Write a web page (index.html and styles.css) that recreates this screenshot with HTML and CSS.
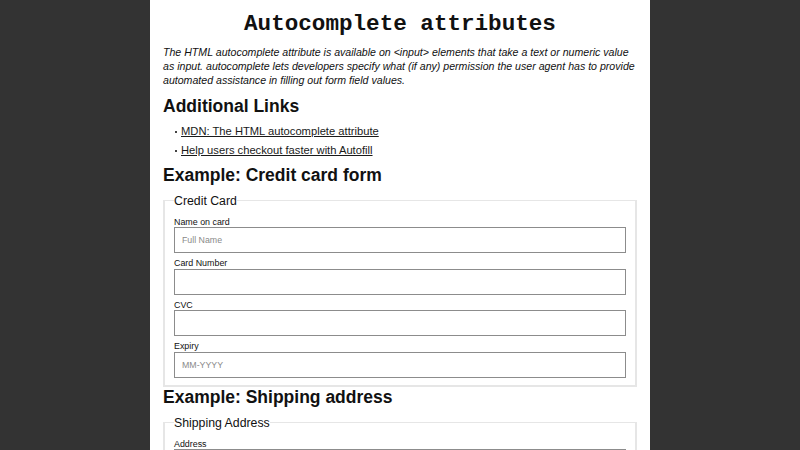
FILE: index.html
```html
<!DOCTYPE html>
<html lang="en">
<head>
  <meta charset="UTF-8" />
  <title>Autocomplete attributes</title>
  <meta name="viewport" content="width=device-width, initial-scale=1" />
  <link rel="stylesheet" href="styles.css">
</head>
<body>
  <main class="page">
    <h1>Autocomplete attributes</h1>
    <p class="intro">The HTML autocomplete attribute is available on &lt;input&gt; elements that take a text or numeric value as input. autocomplete lets developers specify what (if any) permission the user agent has to provide automated assistance in filling out form field values.</p>

    <h2>Additional Links</h2>
    <ul class="links">
      <li><a href="#">MDN: The HTML autocomplete attribute</a></li>
      <li><a href="#">Help users checkout faster with Autofill</a></li>
    </ul>

    <h2>Example: Credit card form</h2>
    <form>
      <fieldset>
        <legend>Credit Card</legend>
        <label for="cc-name">Name on card</label>
        <input id="cc-name" name="cc-name" autocomplete="cc-name" placeholder="Full Name" />
        <label for="cc-number">Card Number</label>
        <input id="cc-number" name="cc-number" autocomplete="cc-number" />
        <label for="cc-csc">CVC</label>
        <input id="cc-csc" name="cc-csc" autocomplete="cc-csc" />
        <label for="cc-exp">Expiry</label>
        <input id="cc-exp" name="cc-exp" autocomplete="cc-exp" placeholder="MM-YYYY" />
      </fieldset>
    </form>

    <h2>Example: Shipping address</h2>
    <form>
      <fieldset>
        <legend>Shipping Address</legend>
        <label for="address">Address</label>
        <input id="address" name="address" autocomplete="street-address" />
        <label for="city">City</label>
        <input id="city" name="city" autocomplete="address-level2" />
        <label for="postal">Postal Code</label>
        <input id="postal" name="postal" autocomplete="postal-code" />
      </fieldset>
    </form>
  </main>
</body>
</html>
```

FILE: styles.css
```css
body {
  margin: 0;
  background: #333;
  font-family: "Liberation Sans", Arial, sans-serif;
  color: #111;
}
.page {
  width: 474px;
  margin: 0 auto;
  padding: 10px 13px 20px 13px;
  background: #fff;
  min-height: 100vh;
}
h1 {
  font-family: "Liberation Mono", "Courier New", monospace;
  font-size: 22.6px;
  line-height: 28px;
  text-align: center;
  margin: 0;
}
.intro {
  font-style: italic;
  font-size: 10.6px;
  line-height: 14px;
  margin: 7px 0 8.5px 0;
}
h2 {
  font-size: 17.5px;
  line-height: 21px;
  margin: 0;
}
.links {
  list-style: none;
  margin: 7.5px 0 7.5px 0;
  padding: 0 0 0 18px;
}
.links li {
  font-size: 11.2px;
  line-height: 14px;
  position: relative;
}
.links li + li {
  margin-top: 5px;
}
/* small square bullet */
.links li::before {
  content: "";
  position: absolute;
  left: -6px;
  top: 7px;
  width: 2px;
  height: 2px;
  background: #444;
}
.links a {
  color: #1a1a1a;
}
form {
  margin: 0;
}
fieldset {
  margin: 8px 0 0 0;
  padding: 0 9px 7px 9px;
  border: 2px solid #e6e6e6;
  border-top-width: 1px;
}
legend {
  font-size: 12.3px;
  line-height: 14px;
  padding: 0;
}
label {
  display: block;
  font-size: 8.9px;
  line-height: 10.5px;
  margin-top: 5px;
}
fieldset label:first-of-type {
  margin-top: 9px;
}
input {
  display: block;
  box-sizing: border-box;
  width: 100%;
  height: 26px;
  margin: 0;
  padding: 0 7px;
  border: 1px solid #8c8c8c;
  font-family: "Liberation Sans", Arial, sans-serif;
  font-size: 8.8px;
}
input::placeholder {
  color: #8a8a8a;
}
```
